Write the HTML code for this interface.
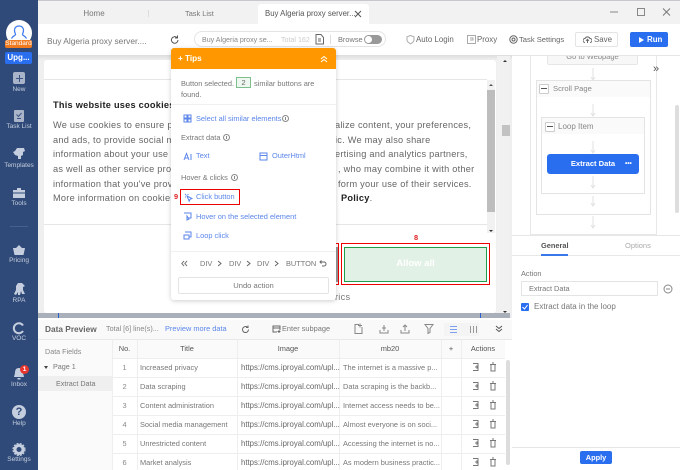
<!DOCTYPE html>
<html><head><meta charset="utf-8"><style>
html,body{margin:0;padding:0;background:#fff}
#r{position:relative;width:680px;height:470px;overflow:hidden;background:#fff;font-family:"Liberation Sans",sans-serif;font-size:7.4px;color:#666;filter:blur(.35px)}
#r div,#r svg{position:absolute}
.t{white-space:nowrap;line-height:12px;height:12px}
.c{text-align:center}
.s{color:#c5cede;font-size:6.500px;width:38px;left:0;text-align:center}
.b{color:#5b86ea}
.k{font-size:9.200px;letter-spacing:.25px;color:#666;line-height:14px;height:14px;white-space:nowrap}
.g{fill:none;stroke:#888;stroke-width:1}
.bl{fill:none;stroke:#5b86ea;stroke-width:1}
.i{fill:#c5cede}
.row{left:112px;width:393px;height:1px;background:#eee}
.col{top:339px;height:131px;width:1px;background:#eee}
.u{font-size:7.800px}
</style></head><body><div id="r">

<!-- top bars -->
<div style="left:38px;top:0;width:642px;height:24px;background:#f2f2f2;border-top:1px solid #c8c8cc;box-sizing:border-box"></div>
<div style="left:258px;top:4px;width:111px;height:20px;background:#fff;border-radius:3px 3px 0 0"></div>
<div class="t c" style="left:64px;top:8px;width:60px;color:#777;font-size:8px">Home</div>
<div style="left:148px;top:10px;width:1px;height:7px;background:#ddd"></div>
<div class="t" style="left:185px;top:8px;color:#777">Task List</div>
<div class="t" style="left:265px;top:8px;color:#555;font-size:7.800px">Buy Algeria proxy server...</div>
<svg style="left:354px;top:10px" width="8" height="8"><path d="M1 1L7 7M7 1L1 7" stroke="#555" fill="none"/></svg>
<svg style="left:610px;top:7px" width="64" height="12"><path d="M0 5H8" stroke="#888"/><path d="M27.500 1.500h7v7h-7z" stroke="#888" fill="none"/><path d="M53 1.500l7 7M60 1.500l-7 7" stroke="#777" fill="none"/></svg>

<!-- toolbar -->
<div style="left:38px;top:24px;width:642px;height:31px;background:#fff"></div>
<div class="t" style="left:47px;top:35px;font-size:8.400px;color:#777">Buy Algeria proxy server....</div>
<svg style="left:170px;top:35px" width="10" height="10"><path d="M8 5a3.300 3.300 0 1 1-1-2.400M7.500 .5v2.500H5" class="g" style="stroke:#555"/></svg>
<div style="left:194px;top:31px;width:192px;height:16px;border:1px solid #e4e4e4;border-radius:9px;box-sizing:border-box"></div>
<div class="t" style="left:202px;top:34px;font-size:7.100px;color:#888">Buy Algeria proxy se...</div>
<div class="t" style="left:281px;top:34px;font-size:7.100px;color:#ccc">Total 162</div>
<svg style="left:315px;top:34px" width="10" height="11"><path d="M1 .5h5l2.500 3v6.500h-7.500z M3 5h3M3 7h3" class="g" style="stroke:#666"/></svg>
<div style="left:330px;top:35px;width:1px;height:9px;background:#ddd"></div>
<div class="t" style="left:338px;top:34px;color:#777">Browse</div>
<div style="left:364px;top:35px;width:18px;height:9px;background:#999;border-radius:5px"></div>
<div style="left:365px;top:36px;width:7px;height:7px;background:#fff;border-radius:50%"></div>
<svg style="left:406px;top:35px" width="9" height="10"><path d="M4.500 .5l3.500 1.300v3c0 2-1.500 3-3.500 4-2-1-3.500-2-3.500-4v-3z" class="g" style="stroke:#aaa"/></svg>
<div class="t" style="left:416px;top:34px;font-size:7.900px;color:#666">Auto Login</div>
<svg style="left:467px;top:35px" width="9" height="9"><path d="M.5 .5h8v8h-8zM3 3h3v2H3" class="g" style="stroke:#aaa"/></svg>
<div class="t" style="left:477px;top:34px;font-size:7.900px;color:#666">Proxy</div>
<svg style="left:509px;top:35px" width="9" height="9"><circle cx="4.500" cy="4.500" r="3.700" class="g" style="stroke:#666"/><circle cx="4.500" cy="4.500" r="1.500" class="g" style="stroke:#666"/></svg>
<div class="t" style="left:519px;top:34px;font-size:7.600px;color:#666">Task Settings</div>
<div style="left:575px;top:32px;width:43px;height:15px;border:1px solid #e4e4e4;border-radius:2px;box-sizing:border-box"></div>
<svg style="left:583px;top:35px" width="9" height="9"><path d="M2 7.500a2 2 0 0 1 0-4a2.700 2.700 0 0 1 5 0a2 2 0 0 1 0 4M4.500 8V4.500M3 5.800l1.500-1.500l1.500 1.500" class="g" style="stroke:#666"/></svg>
<div class="t" style="left:594px;top:34px;font-size:7.900px;color:#666">Save</div>
<div style="left:630px;top:32px;width:38px;height:15px;background:#2a6ef0;border-radius:2px"></div>
<div style="left:639px;top:37px;width:0;height:0;border-left:5px solid #fff;border-top:3px solid transparent;border-bottom:3px solid transparent"></div>
<div class="t" style="left:647px;top:34px;font-size:7.900px;color:#fff;font-weight:bold">Run</div>

<!-- content -->
<div style="left:38px;top:55px;width:474px;height:265px;background:#efefef"></div>
<div style="left:38px;top:55px;width:474px;height:5px;background:linear-gradient(#dcdcdc,#efefef)"></div>
<div style="left:44px;top:60px;width:452px;height:253px;background:#fff;border-radius:3px"></div>
<div style="left:44px;top:79px;width:443px;height:1px;background:#e6e6e6"></div>
<div style="left:44px;top:224px;width:443px;height:1px;background:#e6e6e6"></div>
<div style="left:487px;top:80px;width:8px;height:153px;background:#f1f1f1"></div>
<div style="left:487px;top:90px;width:8px;height:122px;background:#bdbdbd"></div>
<div style="left:489px;top:84px;width:0;height:0;border:2px solid transparent;border-bottom:2px solid #555;border-top:0"></div>
<div style="left:489px;top:230px;width:0;height:0;border:2px solid transparent;border-top:2px solid #333;border-bottom:0"></div>
<div style="left:497px;top:56px;width:13px;height:262px;background:#f1f1f1"></div>
<div style="left:502px;top:125px;width:8px;height:11px;background:#c2c2c2"></div>
<div style="left:503px;top:60px;width:0;height:0;border:2px solid transparent;border-bottom:2px solid #333;border-top:0"></div>
<div style="left:503px;top:311px;width:0;height:0;border:2px solid transparent;border-top:2px solid #333;border-bottom:0"></div>
<div style="left:38px;top:313px;width:472px;height:5px;background:#a9b0ba"></div>
<div style="left:58px;top:313px;width:1px;height:5px;background:#2a5fd0"></div>
<div style="left:480px;top:313px;width:1px;height:5px;background:#2a5fd0"></div>

<div class="k" style="left:53px;top:98px;font-weight:bold;color:#222">This website uses cookies</div>
<div class="k" style="left:53px;top:118px">We use cookies to ensure proper</div>
<div class="k" style="left:53px;top:133px">and ads, to provide social media</div>
<div class="k" style="left:53px;top:147px">information about your use of our</div>
<div class="k" style="left:53px;top:162px">as well as other service providers</div>
<div class="k" style="left:53px;top:177px">information that you've provided</div>
<div class="k" style="left:53px;top:191px">More information on cookies</div>
<div class="k" style="left:335px;top:118px">alize content, your preferences,</div>
<div class="k" style="left:335px;top:133px">ic. We may also share</div>
<div class="k" style="left:335px;top:147px">ertising and analytics partners,</div>
<div class="k" style="left:338px;top:162px">, who may combine it with other</div>
<div class="k" style="left:338px;top:177px">form your use of their services.</div>
<div class="k" style="left:341px;top:191px;color:#222"><b>Policy</b><span style="color:#666">.</span></div>
<div class="k" style="left:335px;top:290px;color:#777">rics</div>

<!-- Allow all -->
<div style="left:334px;top:247px;width:4px;height:35px;background:#999"></div>
<div style="left:336px;top:243px;width:3px;height:42px;border:solid #e00;border-width:1px 1px 1px 0;box-sizing:border-box"></div>
<div style="left:341px;top:243px;width:149px;height:42px;border:1px solid #e00;box-sizing:border-box"></div>
<div style="left:344px;top:247px;width:143px;height:35px;border:1px solid #1e9e4a;background:#e2f1e6;box-sizing:border-box"></div>
<div class="t c" style="left:344px;top:258px;width:143px;font-size:9.500px;color:#fff;font-weight:bold">Allow all</div>
<div class="t c" style="left:398px;top:232px;width:36px;color:#e02020;font-weight:bold">8</div>

<!-- popup -->
<div style="left:171px;top:48px;width:165px;height:252px;background:#fff;border-radius:3px;box-shadow:0 1px 5px rgba(0,0,0,.2)"></div>
<div style="left:171px;top:48px;width:165px;height:21px;background:#ff9800;border-radius:3px 3px 0 0"></div>
<div class="t" style="left:178px;top:53px;font-size:8.200px;color:#fff;font-weight:bold">+ Tips</div>
<svg style="left:320px;top:55px" width="8" height="8"><path d="M1 4l3-2.500l3 2.500M1 7l3-2.500l3 2.500" fill="none" stroke="#fff"/></svg>
<div class="t" style="left:181px;top:78px;color:#777">Button selected.</div>
<div class="t c" style="left:236px;top:77px;width:15px;height:11px;border:1px solid #7cbf8c;background:#eef8f0;box-sizing:border-box;line-height:9px;color:#666">2</div>
<div class="t" style="left:254px;top:78px;color:#777">similar buttons are</div>
<div class="t" style="left:181px;top:89px;color:#777">found.</div>
<div style="left:171px;top:104px;width:165px;height:1px;background:#f0f0f0"></div>
<svg style="left:183px;top:114px" width="9" height="9"><path d="M1 1h3v3H1zM5 1h3v3H5zM1 5h3v3H1zM5 5h3v3H5z" class="bl"/></svg>
<div class="t b" style="left:196px;top:113px">Select all similar elements</div>
<svg style="left:281px;top:114px" width="9" height="9"><circle cx="4.500" cy="4.500" r="3" class="g"/><path d="M4.500 3v3" stroke="#888"/></svg>
<div class="t" style="left:181px;top:132px;color:#777">Extract data</div>
<svg style="left:222px;top:133px" width="9" height="9"><circle cx="4.500" cy="4.500" r="3" class="g"/><path d="M4.500 3v3" stroke="#888"/></svg>
<svg style="left:183px;top:152px" width="10" height="9"><path d="M1 8l2.500-6.500L6 8M2 6h3M8 2v6" class="bl"/></svg>
<div class="t b" style="left:196px;top:150px">Text</div>
<svg style="left:259px;top:152px" width="9" height="9"><path d="M1 1h7v7H1zM1 3.500h7" class="bl"/></svg>
<div class="t b" style="left:272px;top:150px">OuterHtml</div>
<div class="t" style="left:181px;top:172px;color:#777">Hover &amp; clicks</div>
<svg style="left:230px;top:173px" width="9" height="9"><circle cx="4.500" cy="4.500" r="3" class="g"/><path d="M4.500 3v3" stroke="#888"/></svg>
<div class="t" style="left:174px;top:191px;color:#e02020;font-weight:bold">9</div>
<div style="left:180px;top:189px;width:60px;height:16px;border:1px solid #e00;box-sizing:border-box"></div>
<svg style="left:184px;top:193px" width="9" height="9"><path d="M3 3l5 2.500l-2 .8l-.8 2zM1 1l1 1M1 4h1M4 1v1" class="bl"/></svg>
<div class="t b" style="left:196px;top:191px">Click button</div>
<svg style="left:183px;top:212px" width="10" height="9"><path d="M1 1h7v5H5M6 7l-2-3v4z" class="bl"/></svg>
<div class="t b" style="left:196px;top:211px">Hover on the selected element</div>
<svg style="left:183px;top:231px" width="10" height="9"><path d="M2 1h6v5H6M1 4h5v4H1z" class="bl"/></svg>
<div class="t b" style="left:196px;top:230px">Loop click</div>
<div style="left:171px;top:251px;width:165px;height:1px;background:#f0f0f0"></div>
<svg style="left:181px;top:260px" width="7" height="7"><path d="M3 1L.8 3.500L3 6M6 1L3.800 3.500L6 6" fill="none" stroke="#777"/></svg>
<div class="t" style="left:200px;top:258px;color:#777">DIV</div>
<div class="t" style="left:229px;top:258px;color:#777">DIV</div>
<div class="t" style="left:257px;top:258px;color:#777">DIV</div>
<div class="t" style="left:286px;top:258px;color:#777">BUTTON</div>
<svg style="left:218px;top:260px" width="100" height="7"><path d="M0 1l3 2.500L0 6M29 1l3 2.500L29 6M57 1l3 2.500L57 6" fill="none" stroke="#666"/></svg>
<svg style="left:319px;top:260px" width="8" height="8"><path d="M1 2h4a2 2 0 0 1 0 4H3M2.500 .5L1 2l1.500 1.500" fill="none" stroke="#666"/></svg>
<div class="t c" style="left:178px;top:277px;width:151px;height:17px;line-height:15px;border:1px solid #e4e4e4;border-radius:2px;box-sizing:border-box;color:#777;font-size:7.600px">Undo action</div>

<!-- right panel -->
<div style="left:512px;top:55px;width:168px;height:415px;background:#fff"></div>
<div style="left:512px;top:55px;width:168px;height:1px;background:#e6e6e6"></div>
<div style="left:530px;top:56px;width:127px;height:179px;border:1px solid #e8e8e8;border-top:0;box-sizing:border-box"></div>
<div style="left:547px;top:56px;width:92px;height:10px;overflow:hidden"><div class="t c" style="left:0;top:-6px;width:91px;height:15px;line-height:12px;background:#f7f7f7;border:1px solid #e6e6e6;border-radius:2px;box-sizing:border-box;color:#888;font-size:7.500px">Go to Webpage</div></div>
<div style="left:536px;top:80px;width:115px;height:135px;border:1px solid #e4e4e4;box-sizing:border-box"></div>
<div style="left:537px;top:81px;width:113px;height:16px;background:#fafafa"></div>
<div style="left:539px;top:84px;width:10px;height:10px;border:1px solid #ccc;background:#fff;border-radius:1px;box-sizing:border-box"></div>
<div style="left:541px;top:88px;width:6px;height:1px;background:#555"></div>
<div class="t" style="left:553px;top:83px;font-size:7.600px;color:#888">Scroll Page</div>
<div style="left:541px;top:117px;width:104px;height:77px;border:1px solid #e4e4e4;box-sizing:border-box"></div>
<div style="left:542px;top:118px;width:102px;height:16px;background:#fafafa"></div>
<div style="left:545px;top:122px;width:10px;height:10px;border:1px solid #ccc;background:#fff;border-radius:1px;box-sizing:border-box"></div>
<div style="left:547px;top:126px;width:6px;height:1px;background:#555"></div>
<div class="t" style="left:558px;top:121px;font-size:8px;color:#888">Loop Item</div>
<div style="left:547px;top:154px;width:92px;height:20px;background:#2a6ef0;border-radius:3px"></div>
<div class="t c" style="left:547px;top:158px;width:92px;font-size:7.600px;color:#fff;font-weight:bold">Extract Data</div>
<div class="t" style="left:625px;top:158px;color:#fff;font-weight:bold;font-size:6.500px">•••</div>
<svg style="left:588px;top:66px" width="10" height="170"><g stroke="#e2e2e2" fill="none"><path d="M5 2v12M3 11l2 3l2-3M5 38v12M3 47l2 3l2-3M5 75v12M3 84l2 3l2-3M5 110v12M3 119l2 3l2-3M5 130v10M3 137l2 3l2-3M5 150v12M3 159l2 3l2-3"/></g></svg>
<div class="t" style="left:653px;top:63px;font-size:11px;color:#555">»</div>
<div style="left:675px;top:105px;width:4px;height:108px;background:#ddd;border-radius:2px"></div>

<div style="left:512px;top:235px;width:168px;height:1px;background:#e6e6e6"></div>
<div style="left:512px;top:255px;width:168px;height:1px;background:#e8e8e8"></div>
<div class="t" style="left:541px;top:240px;font-size:7.400px;color:#555;font-weight:bold">General</div>
<div style="left:541px;top:254px;width:27px;height:2px;background:#3a78ea"></div>
<div class="t" style="left:625px;top:240px;font-size:7.500px;color:#aaa">Options</div>
<div class="t" style="left:521px;top:268px;color:#777">Action</div>
<div class="t" style="left:521px;top:281px;width:137px;height:15px;line-height:13px;border:1px solid #e4e4e4;box-sizing:border-box;padding-left:7px;color:#777">Extract Data</div>
<svg style="left:663px;top:284px" width="10" height="10"><circle cx="5" cy="5" r="4" class="g"/><path d="M3 5h4" stroke="#888"/></svg>
<div style="left:521px;top:303px;width:8px;height:8px;background:#2a6ef0;border-radius:1px"></div>
<svg style="left:521px;top:303px" width="8" height="8"><path d="M1.500 4l2 2l3-4" fill="none" stroke="#fff"/></svg>
<div class="t" style="left:534px;top:301px;color:#777;font-size:8px">Extract data in the loop</div>
<div style="left:512px;top:447px;width:168px;height:1px;background:#e6e6e6"></div>
<div class="t c" style="left:580px;top:451px;width:32px;height:13px;line-height:13px;background:#2a6ef0;border-radius:2px;color:#fff;font-weight:bold">Apply</div>

<!-- data preview -->
<div style="left:38px;top:318px;width:474px;height:152px;background:#fff"></div>
<div style="left:38px;top:320px;width:474px;height:19px;background:#f9f9f9"></div>
<div style="left:38px;top:339px;width:74px;height:131px;background:#fafafa"></div>
<div style="left:38px;top:376px;width:74px;height:15px;background:#efefef"></div>
<div style="left:38px;top:339px;width:474px;height:1px;background:#e8e8e8"></div>
<div class="t" style="left:45px;top:323px;font-size:8.300px;font-weight:bold;color:#666">Data Preview</div>
<div class="t" style="left:106px;top:323px;font-size:7.200px;color:#888">Total [6] line(s)...</div>
<div class="t b" style="left:165px;top:323px">Preview more data</div>
<svg style="left:241px;top:325px" width="9" height="9"><path d="M7.500 4.500a3 3 0 1 1-1-2.200M7 .5v2H5" fill="none" stroke="#666"/></svg>
<svg style="left:272px;top:325px" width="9" height="9"><path d="M8 5V1H1v6h4M1 3h7M7 5v3M5.500 6.500H8.500" fill="none" stroke="#666"/></svg>
<div class="t" style="left:282px;top:323px;color:#777">Enter subpage</div>
<svg style="left:353px;top:323px" width="85" height="12"><g fill="none" stroke="#888"><path d="M6 1.500H2v9h7V4M7 .5v4M5 2.500h4"/><path d="M27 7v3h8V7M31 2v6M29 5h4"/><path d="M48 7v3h8V7M52 8V2M50 4l2-2l2 2"/><path d="M72 1.500h8l-3 4v4l-2 1v-5z"/></g></svg>
<div style="left:444px;top:323px;width:35px;height:13px;background:#f4f4f4"></div>
<svg style="left:447px;top:325px" width="34" height="9"><path d="M3 1.500h7M3 4.500h7M3 7.500h7" stroke="#7c9ff0"/><path d="M23.500 1v7M26.500 1v7M29.500 1v7" stroke="#999"/></svg>
<svg style="left:495px;top:325px" width="8" height="8"><path d="M1 1l3 2.500L7 1M1 4l3 2.500L7 4" fill="none" stroke="#555"/></svg>
<div class="t" style="left:45px;top:346px;color:#888;font-size:7.200px">Data Fields</div>
<div style="left:44px;top:366px;width:0;height:0;border-top:3px solid #444;border-left:2px solid transparent;border-right:2px solid transparent"></div>
<div class="t" style="left:53px;top:361px;color:#777;font-size:7.200px">Page 1</div>
<div class="t" style="left:56px;top:378px;color:#777;font-size:7.200px">Extract Data</div>

<div style="left:112px;top:340px;width:393px;height:18px;background:#fafafa"></div>
<div class="row" style="top:358px"></div><div class="row" style="top:377px"></div><div class="row" style="top:396px"></div><div class="row" style="top:415px"></div><div class="row" style="top:434px"></div><div class="row" style="top:453px"></div>
<div class="col" style="left:112px"></div><div class="col" style="left:137px"></div><div class="col" style="left:237px"></div><div class="col" style="left:339px"></div><div class="col" style="left:441px"></div><div class="col" style="left:461px"></div>
<div class="t c" style="left:112px;top:343px;width:25px;color:#555">No.</div>
<div class="t c" style="left:137px;top:343px;width:100px;color:#555">Title</div>
<div class="t c" style="left:237px;top:343px;width:102px;color:#555">Image</div>
<div class="t c" style="left:339px;top:343px;width:102px;color:#555">mb20</div>
<div class="t c" style="left:441px;top:343px;width:20px;color:#555">+</div>
<div class="t c" style="left:461px;top:343px;width:44px;color:#555">Actions</div>

<div class="t c" style="left:112px;top:362px;width:25px;color:#888">1</div><div class="t" style="left:140px;top:362px;color:#777">Increased privacy</div><div class="t u" style="left:241px;top:362px">https://cms.iproyal.com/upl...</div><div class="t" style="left:343px;top:362px;color:#777">The internet is a massive p...</div>
<div class="t c" style="left:112px;top:381px;width:25px;color:#888">2</div><div class="t" style="left:140px;top:381px;color:#777">Data scraping</div><div class="t u" style="left:241px;top:381px">https://cms.iproyal.com/upl...</div><div class="t" style="left:343px;top:381px;color:#777">Data scraping is the backb...</div>
<div class="t c" style="left:112px;top:400px;width:25px;color:#888">3</div><div class="t" style="left:140px;top:400px;color:#777">Content administration</div><div class="t u" style="left:241px;top:400px">https://cms.iproyal.com/upl...</div><div class="t" style="left:343px;top:400px;color:#777">Internet access needs to be...</div>
<div class="t c" style="left:112px;top:419px;width:25px;color:#888">4</div><div class="t" style="left:140px;top:419px;color:#777">Social media management</div><div class="t u" style="left:241px;top:419px">https://cms.iproyal.com/upl...</div><div class="t" style="left:343px;top:419px;color:#777">Almost everyone is on soci...</div>
<div class="t c" style="left:112px;top:438px;width:25px;color:#888">5</div><div class="t" style="left:140px;top:438px;color:#777">Unrestricted content</div><div class="t u" style="left:241px;top:438px">https://cms.iproyal.com/upl...</div><div class="t" style="left:343px;top:438px;color:#777">Accessing the internet is no...</div>
<div class="t c" style="left:112px;top:457px;width:25px;color:#888">6</div><div class="t" style="left:140px;top:457px;color:#777">Market analysis</div><div class="t u" style="left:241px;top:457px">https://cms.iproyal.com/upl...</div><div class="t" style="left:343px;top:457px;color:#777">As modern business practic...</div>
<svg style="left:472px;top:362px" width="30" height="108"><g fill="none" stroke="#777"><path d="M1 1.500h5v7H1M3 5h3M4.500 3.500L6 5L4.500 6.500M18 2.500h6M19 2.500v6.500h4V2.500M20 1h2"/><path transform="translate(0,19)" d="M1 1.500h5v7H1M3 5h3M4.500 3.500L6 5L4.500 6.500M18 2.500h6M19 2.500v6.500h4V2.500M20 1h2"/><path transform="translate(0,38)" d="M1 1.500h5v7H1M3 5h3M4.500 3.500L6 5L4.500 6.500M18 2.500h6M19 2.500v6.500h4V2.500M20 1h2"/><path transform="translate(0,57)" d="M1 1.500h5v7H1M3 5h3M4.500 3.500L6 5L4.500 6.500M18 2.500h6M19 2.500v6.500h4V2.500M20 1h2"/><path transform="translate(0,76)" d="M1 1.500h5v7H1M3 5h3M4.500 3.500L6 5L4.500 6.500M18 2.500h6M19 2.500v6.500h4V2.500M20 1h2"/><path transform="translate(0,95)" d="M1 1.500h5v7H1M3 5h3M4.500 3.500L6 5L4.500 6.500M18 2.500h6M19 2.500v6.500h4V2.500M20 1h2"/></g></svg>
<div style="left:506px;top:360px;width:4px;height:105px;background:#ddd;border-radius:2px"></div>

<!-- sidebar -->
<div style="left:0;top:0;width:38px;height:470px;background:#2f4a78"></div>
<div style="left:6px;top:20px;width:26px;height:26px;background:#fff;border-radius:50%"></div>
<svg style="left:10px;top:25px" width="18" height="16"><path d="M9 1c3 0 4.500 2 4.500 4.500c0 2-1 3-1 4c0 1 3 1.500 4 4M9 1c-3 0-4.500 2-4.500 4.500c0 2 1 3 1 4c0 1-3 1.500-4 4" fill="none" stroke="#3f7df0" stroke-width="1.300"/></svg>
<div class="t c" style="left:5px;top:40px;width:27px;height:8px;line-height:8px;background:#f07a20;border-radius:2px;color:#fff;font-size:6.500px">Standard</div>
<div class="t c" style="left:5px;top:52px;width:27px;height:12px;line-height:12px;background:#2a6ef0;border-radius:2px;color:#fff;font-size:8px;font-weight:bold">Upg...</div>
<div style="left:13px;top:72px;width:12px;height:12px;background:#aab4c8;border-radius:2px"></div>
<div style="left:15.500px;top:77.500px;width:7px;height:1px;background:#3a5382"></div>
<div style="left:18.500px;top:74.500px;width:1px;height:7px;background:#3a5382"></div>
<div class="t s" style="top:84px">New</div>
<div style="left:14px;top:110px;width:10px;height:12px;background:#aab4c8;border-radius:1px"></div>
<svg style="left:14px;top:111px" width="10" height="10"><path d="M2.500 3.500l2 2l3-3.500M3 7.500h4" fill="none" stroke="#3a5382"/></svg>
<div class="t s" style="top:121px">Task List</div>
<svg style="left:12px;top:147px" width="14" height="13"><path class="i" d="M5 1h7l1 3l-2 1v3l-2 1v3H6V9L3 8l-2-3l2-1z"/></svg>
<div class="t s" style="top:160px">Templates</div>
<svg style="left:12px;top:187px" width="14" height="12"><path class="i" d="M1 3h12v8H1zM5 1h4v2H5z"/><path d="M1 6h12" stroke="#2f4a78"/></svg>
<div class="t s" style="top:198px">Tools</div>
<div style="left:10px;top:226px;width:18px;height:1px;background:#44608e"></div>
<svg style="left:12px;top:244px" width="14" height="12"><path class="i" d="M1 4l3 0l3-3l3 3l3 0l-1.500 7h-9z"/></svg>
<div class="t s" style="top:255px">Pricing</div>
<svg style="left:12px;top:282px" width="14" height="14"><path class="i" d="M6 1h4l3 3l-2 1v3l2 4l-3 0l-1-3l-1 4H6V10l-2 3L2 12l2-4V4z"/></svg>
<div class="t s" style="top:295px">RPA</div>
<svg style="left:12px;top:322px" width="14" height="13"><path d="M11 9A5 5 0 1 1 11 3.500" fill="none" stroke="#c5cede" stroke-width="2"/></svg>
<div class="t s" style="top:333px">VOC</div>
<svg style="left:13px;top:367px" width="12" height="13"><path class="i" d="M6 1c3 0 4 2 4 5l1 4H1l1-4c0-3 1-5 4-5zM4.500 11h3v1.500h-3z"/></svg>
<div class="t c" style="left:20px;top:365px;width:9px;height:9px;line-height:9px;background:#e8352e;border-radius:50%;color:#fff;font-size:6.500px;font-weight:bold">1</div>
<div class="t s" style="top:379px">Inbox</div>
<div class="t c" style="left:12px;top:405px;width:14px;height:14px;line-height:14px;background:#c5cede;border-radius:50%;color:#2f4a78;font-size:11px;font-weight:bold">?</div>
<div class="t s" style="top:418px">Help</div>
<svg style="left:12px;top:443px" width="14" height="13"><circle cx="7" cy="6.500" r="4" fill="none" stroke="#c5cede" stroke-width="3"/><circle cx="7" cy="6.500" r="6" fill="none" stroke="#c5cede" stroke-width="1.200" stroke-dasharray="2 1.200"/></svg>
<div class="t s" style="top:454px">Settings</div>
</div></body></html>
